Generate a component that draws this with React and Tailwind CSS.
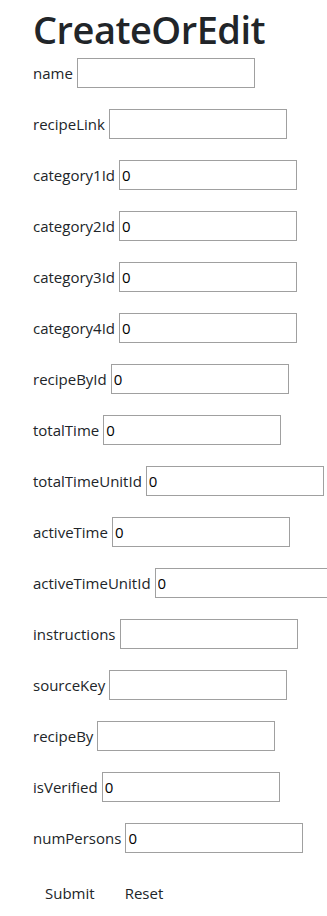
export default function App() {
  const fields = [
    ['name', ''],
    ['recipeLink', ''],
    ['category1Id', '0'],
    ['category2Id', '0'],
    ['category3Id', '0'],
    ['category4Id', '0'],
    ['recipeById', '0'],
    ['totalTime', '0'],
    ['totalTimeUnitId', '0'],
    ['activeTime', '0'],
    ['activeTimeUnitId', '0'],
    ['instructions', ''],
    ['sourceKey', ''],
    ['recipeBy', ''],
    ['isVerified', '0'],
    ['numPersons', '0'],
  ];

  return (
    <div className="min-h-screen bg-white overflow-hidden text-[#212529]" style={{ fontFamily: '"Open Sans", sans-serif' }}>
      <div className="pl-[33px]">
        <h1 className="text-[38px] font-semibold leading-[58px] tracking-[-0.5px]">CreateOrEdit</h1>
        <form className="flex flex-col">
          {fields.map(([label, value]) => (
            <div key={label} className="flex items-center h-[30px] mb-[21px] whitespace-nowrap">
              <label className="text-[15px] mr-[4px]">{label}</label>
              <input
                readOnly
                value={value}
                className="shrink-0 w-[178px] h-[30px] border border-[#a0a0a0] px-[2px] text-[15px] text-black outline-none"
              />
            </div>
          ))}
          <div className="flex gap-[6px] pt-[4px]">
            <button type="button" className="px-[12px] py-[4px] text-[15px]">Submit</button>
            <button type="button" className="px-[12px] py-[4px] text-[15px]">Reset</button>
          </div>
        </form>
      </div>
    </div>
  );
}
